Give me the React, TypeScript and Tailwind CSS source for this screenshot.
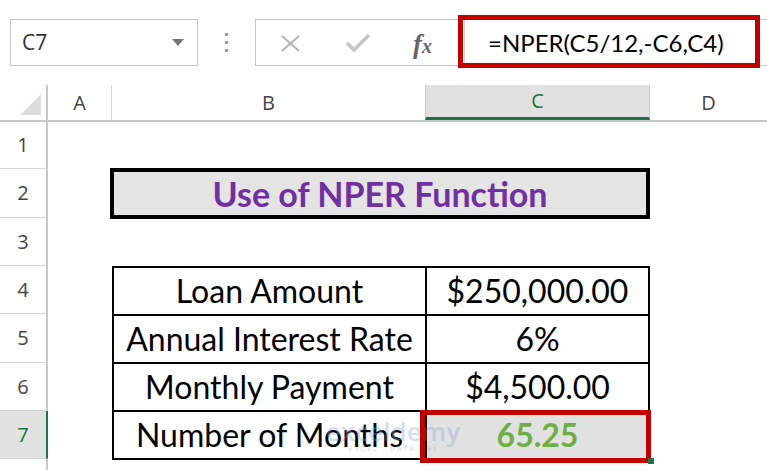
import React from "react";

const rowHeights = ["h-[47px]", "h-[49px]", "h-[48px]", "h-[48px]", "h-[49px]", "h-[48px]", "h-[48px]"];

const tableRows = [
  { label: "Loan Amount", value: "$250,000.00" },
  { label: "Annual Interest Rate", value: "6%" },
  { label: "Monthly Payment", value: "$4,500.00" },
];

const FormulaBar = () => (
  <div className="mt-[19px] flex h-[47px]">
    <div className="ml-[10px] flex h-full w-[188px] items-center justify-between border border-[#c6c6c6] pl-[11px] pr-[13px]">
      <span className="font-['Open_Sans',sans-serif] text-[21px] text-[#333]">C7</span>
      <svg width="12" height="7" viewBox="0 0 12 7">
        <path d="M0 0 L12 0 L6 7 Z" fill="#777" />
      </svg>
    </div>
    <div className="flex w-[57px] flex-col items-center justify-center gap-[5px]">
      <span className="h-[3px] w-[3px] bg-[#9a9a9a]" />
      <span className="h-[3px] w-[3px] bg-[#9a9a9a]" />
      <span className="h-[3px] w-[3px] bg-[#9a9a9a]" />
    </div>
    <div className="flex h-full flex-1 border-y border-l border-[#c6c6c6]">
      <div className="relative w-[208px]">
        <svg className="absolute left-[25px] top-[15px]" width="19" height="17" viewBox="0 0 19 17">
          <path d="M1 1 L18 16 M18 1 L1 16" stroke="#b3b3b3" strokeWidth="2" fill="none" />
        </svg>
        <svg className="absolute left-[89px] top-[13px]" width="26" height="20" viewBox="0 0 26 20">
          <path d="M2 10 L9 17 L24 2" stroke="#c4c4c4" strokeWidth="3.5" fill="none" />
        </svg>
        <span className="absolute left-[157px] top-[4px] font-['Liberation_Serif',serif] text-[27px] font-bold italic text-[#666]">
          f<span className="text-[20px]">x</span>
        </span>
      </div>
      <div className="flex flex-1 items-center border-l border-[#d4d4d4] pl-[23px]">
        <span className="font-['Lato',sans-serif] text-[24px] text-black">=NPER(C5/12,-C6,C4)</span>
      </div>
    </div>
  </div>
);

const ColumnHeaders = () => (
  <div className="mt-[19px] flex h-[37px] border-b-2 border-[#c8c8c8] font-['Open_Sans',sans-serif] text-[20px] text-[#444]">
    <div className="relative w-[48px] border-r-2 border-[#c8c8c8]">
      <svg className="absolute left-[20px] top-[9px]" width="21" height="21" viewBox="0 0 21 21">
        <path d="M21 0 L21 21 L0 21 Z" fill="#dcdcdc" />
      </svg>
    </div>
    <div className="flex w-[64px] items-center justify-center border-r border-[#d9d9d9]">A</div>
    <div className="flex w-[313px] items-center justify-center">B</div>
    <div className="flex w-[225px] items-center justify-center border-x border-[#c8c8c8] border-b-[3px] border-b-[#217346] bg-[#e1e1e1] text-[#217346]">
      C
    </div>
    <div className="flex flex-1 items-center justify-center">D</div>
  </div>
);

const RowHeaders = () => (
  <div className="flex w-[48px] flex-col font-['Open_Sans',sans-serif] text-[20px] text-[#444]">
    {rowHeights.map((h, i) =>
      i === 6 ? (
        <div key={i} className={`${h} flex items-center justify-center border-b border-r-2 border-b-[#d4d4d4] border-r-[#217346] bg-[#e1e1e1] text-[#217346]`}>
          {i + 1}
        </div>
      ) : (
        <div key={i} className={`${h} flex items-center justify-center border-b border-r-2 border-b-[#d4d4d4] border-r-[#c8c8c8]`}>
          {i + 1}
        </div>
      )
    )}
    <div className="flex-1 border-r-2 border-[#c8c8c8]" />
  </div>
);

export default function App() {
  return (
    <div className="relative h-[470px] w-[767px] overflow-hidden bg-white">
      <FormulaBar />
      <ColumnHeaders />

      <div className="flex h-[400px]">
        <RowHeaders />
        <div className="flex flex-1 flex-col font-['Lato',sans-serif]">
          <div className="h-[47px]" />
          <div className="h-[49px] pl-[62px]">
            <div className="flex h-[51px] w-[540px] -translate-y-px items-center justify-center border-4 border-black bg-[#e4e4e4]">
              <span className="text-[34px] font-bold text-[#7030a0]">Use of NPER Function</span>
            </div>
          </div>
          <div className="h-[48px]" />
          <div className="ml-[64px] w-[538px] border-x-2 border-b-2 border-black text-[32px] text-black">
            {tableRows.map((r) => (
              <div key={r.label} className="flex h-[48px] border-t-2 border-black">
                <div className="flex w-[313px] items-center justify-center border-r-2 border-black">{r.label}</div>
                <div className="flex flex-1 items-center justify-center">{r.value}</div>
              </div>
            ))}
            <div className="flex h-[48px] border-t-2 border-black">
              <div className="flex w-[313px] items-center justify-center border-r-2 border-black">Number of Months</div>
              <div className="flex flex-1 items-center justify-center bg-[#e1e1e1] font-bold text-[#70ad47]">65.25</div>
            </div>
          </div>
        </div>
      </div>

      {/* watermark */}
      <div className="absolute left-[326px] top-[418px] flex flex-col items-center font-['Open_Sans',sans-serif] leading-none opacity-35">
        <span className="text-[26px] font-semibold text-[#8ea3d6]">exceldemy</span>
        <span className="mt-[1px] text-[7px] tracking-[2px] text-[#8a8a8a]">EXCEL · DATA · BI</span>
      </div>

      {/* highlight boxes */}
      <div className="absolute left-[458px] top-[15px] h-[53px] w-[302px] border-[5px] border-[#c00000]" />
      <div className="absolute left-[420px] top-[410px] h-[53px] w-[231px] border-[5px] border-[#c00000]" />
      <div className="absolute left-[648px] top-[458px] h-[6px] w-[6px] bg-[#217346]" />
    </div>
  );
}
